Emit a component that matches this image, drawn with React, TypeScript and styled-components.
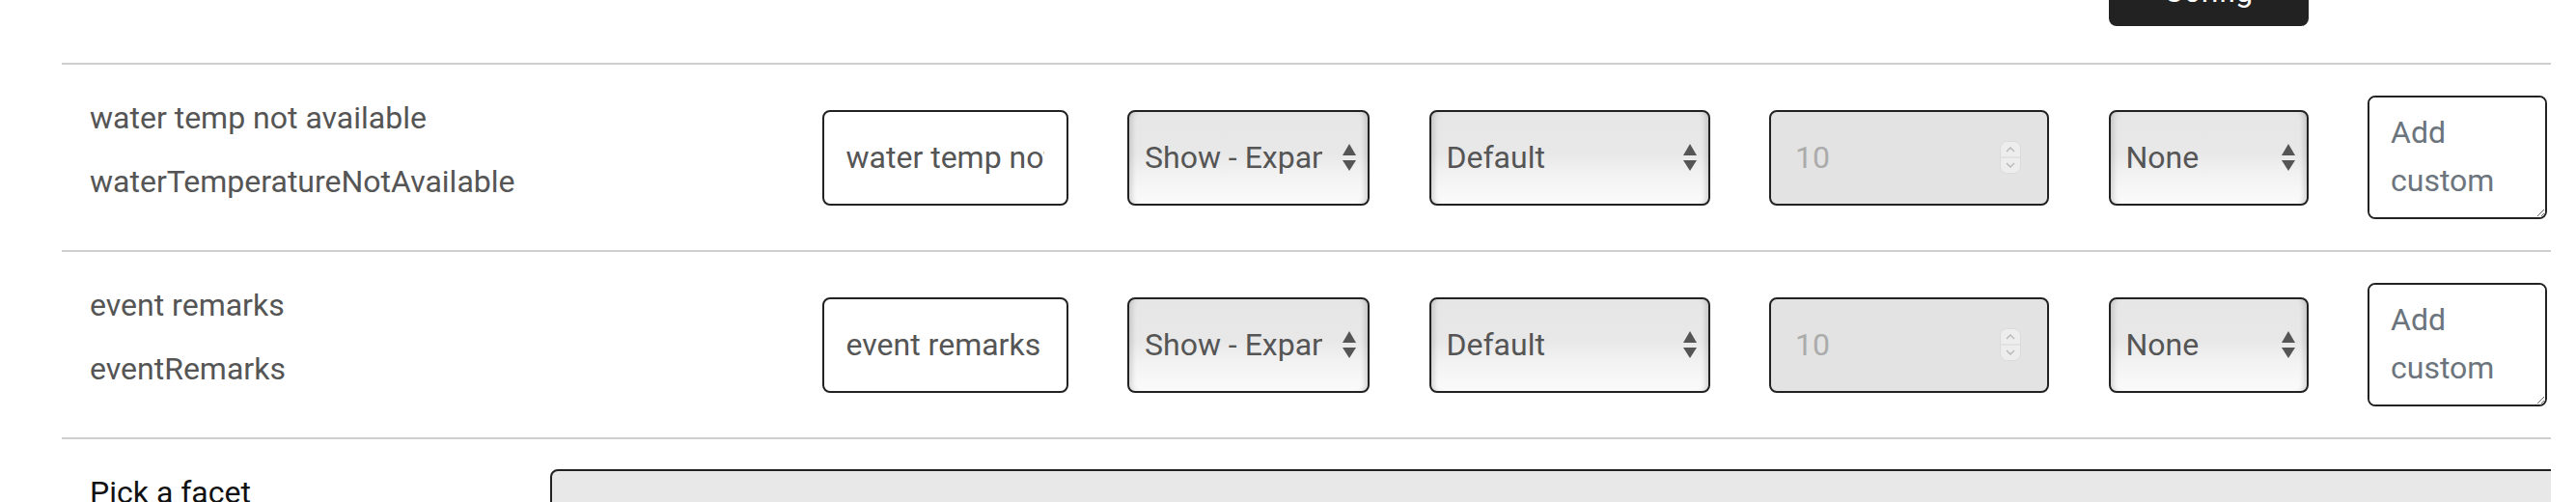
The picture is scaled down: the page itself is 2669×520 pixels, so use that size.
import React from 'react';
import styled, { createGlobalStyle } from 'styled-components';

interface Field {
    label: string;
    key: string;
}

const fields: Field[] = [
    { label: 'water temp not available', key: 'waterTemperatureNotAvailable' },
    { label: 'event remarks', key: 'eventRemarks' }
];

const GlobalStyle = createGlobalStyle`
    body {
        margin: 0;
        background: #fff;
        font-family: Roboto, "Liberation Sans", sans-serif;
    }
    * { box-sizing: border-box; }
`

const columns = '1fr 255px 251px 291px 290px 207px 186px';

const Page = styled.div`
    margin: 0 26px 0 64px;
    overflow: hidden;
`

const Header = styled.div`
    display: grid;
    grid-template-columns: ${columns};
    column-gap: 61.5px;
    padding-right: 4px;
    margin-top: -45px;
    padding-bottom: 38px;
`

const ConfigButton = styled.button`
    grid-column: 6;
    height: 72px;
    padding: 12px 24px;
    border: none;
    border-radius: 8px;
    background: #222;
    color: #fff;
    font: 400 32px/48px Roboto, sans-serif;
`

const FieldRow = styled.div`
    display: grid;
    grid-template-columns: ${columns};
    column-gap: 61.5px;
    align-items: center;
    min-height: 194px;
    padding-right: 4px;
    border-top: 2px solid #cfcfcf;
`

const LabelCell = styled.div`
    align-self: start;
    display: flex;
    flex-direction: column;
    gap: 18px;
    padding: 31px 0 0 29px;
`

const LabelLine = styled.div`
    font-size: 32px;
    line-height: 48px;
    color: #555;
    white-space: nowrap;
`

const TextInput = styled.input`
    width: 100%;
    height: 99px;
    padding: 0 23px;
    border: 2px solid #222;
    border-radius: 8px;
    background: #fff;
    color: #555;
    font: 400 32px/48px Roboto, sans-serif;
    outline: none;
`

const SelectBox = styled.div`
    display: flex;
    align-items: center;
    height: 99px;
    border: 2px solid #222;
    border-radius: 8px;
    overflow: hidden;
    background: linear-gradient(to bottom, #e6e6e6 0%, #e8e8e8 45%, #f2f2f2 68%, #fbfbfb 100%);
    box-shadow: inset 7px 0 6px -5px rgba(0, 0, 0, 0.18), inset -7px 0 6px -5px rgba(0, 0, 0, 0.18);
    color: #555;
`

const NativeSelect = styled.select`
    flex: 1;
    min-width: 0;
    height: 100%;
    padding: 0 0 0 16px;
    border: none;
    background: transparent;
    appearance: none;
    color: #555;
    font: 400 32px/48px Roboto, sans-serif;
    outline: none;
`

const Arrows = styled.svg`
    flex: none;
    margin: 0 12px 0 21px;
    fill: #555;
`

const NumberBox = styled.div`
    display: flex;
    align-items: center;
    height: 99px;
    padding: 0 27px 0 25px;
    border: 2px solid #222;
    border-radius: 8px;
    background: #e3e3e3;
`

const NumberInput = styled.input`
    flex: 1;
    min-width: 0;
    padding: 0;
    border: none;
    background: transparent;
    font: 400 32px/48px Roboto, sans-serif;
    outline: none;

    &:disabled {
        color: #ababab;
        -webkit-text-fill-color: #ababab;
    }
`

const Notes = styled.textarea`
    width: 100%;
    height: 128px;
    padding: 11px 22px;
    border: 2px solid #222;
    border-radius: 8px;
    font: 400 32px/50px Roboto, sans-serif;
    color: #555;
    outline: none;

    &::placeholder {
        color: #6c757d;
    }
`

const FacetRow = styled.div`
    display: flex;
    padding-top: 31px;
    border-top: 2px solid #cfcfcf;
`

const FacetLabel = styled.div`
    flex: none;
    width: 506px;
    padding-left: 29px;
    font-size: 32px;
    line-height: 48px;
    color: #111;
`

const FacetBox = styled.div`
    flex: 1;
    height: 110px;
    margin-right: -20px;
    border: 2px solid #222;
    border-radius: 8px;
    background: #e8e8e8;
`

const UpDown = () => (
    <Arrows width="14" height="28" viewBox="0 0 14 28">
        <polygon points="7,0 14,12 0,12" />
        <polygon points="0,17 14,17 7,28" />
    </Arrows>
);

const Spinner = () => (
    <svg width="22" height="34" viewBox="0 0 22 34">
        <rect x="0.5" y="0.5" width="21" height="33" rx="7" fill="#ededed" stroke="#dadada" />
        <line x1="1" y1="17" x2="21" y2="17" stroke="#d6d6d6" />
        <polyline points="7,11 11,7 15,11" fill="none" stroke="#b9b9b9" strokeWidth="1.5" />
        <polyline points="7,23 11,27 15,23" fill="none" stroke="#b9b9b9" strokeWidth="1.5" />
    </svg>
);

const Select = ({ value, options }: { value: string, options: string[] }) => (
    <SelectBox>
        <NativeSelect defaultValue={value}>
            {options.map(option => <option key={option}>{option}</option>)}
        </NativeSelect>
        <UpDown />
    </SelectBox>
);

const FieldConfigRow = ({ field }: { field: Field }) => (
    <FieldRow>
        <LabelCell>
            <LabelLine>{field.label}</LabelLine>
            <LabelLine>{field.key}</LabelLine>
        </LabelCell>
        <TextInput type="text" defaultValue={field.label} />
        <Select value="Show - Expanded" options={['Show - Expanded', 'Show - Collapsed', 'Hide']} />
        <Select value="Default" options={['Default', 'Text', 'Number', 'Date']} />
        <NumberBox>
            <NumberInput type="number" defaultValue={10} disabled />
            <Spinner />
        </NumberBox>
        <Select value="None" options={['None', 'Ascending', 'Descending']} />
        <Notes placeholder="Add custom label" />
    </FieldRow>
);

export default function App() {
    return (
        <Page>
            <GlobalStyle />
            <Header>
                <ConfigButton>Config</ConfigButton>
            </Header>
            {fields.map(field => <FieldConfigRow key={field.key} field={field} />)}
            <FacetRow>
                <FacetLabel>Pick a facet</FacetLabel>
                <FacetBox />
            </FacetRow>
        </Page>
    );
}
